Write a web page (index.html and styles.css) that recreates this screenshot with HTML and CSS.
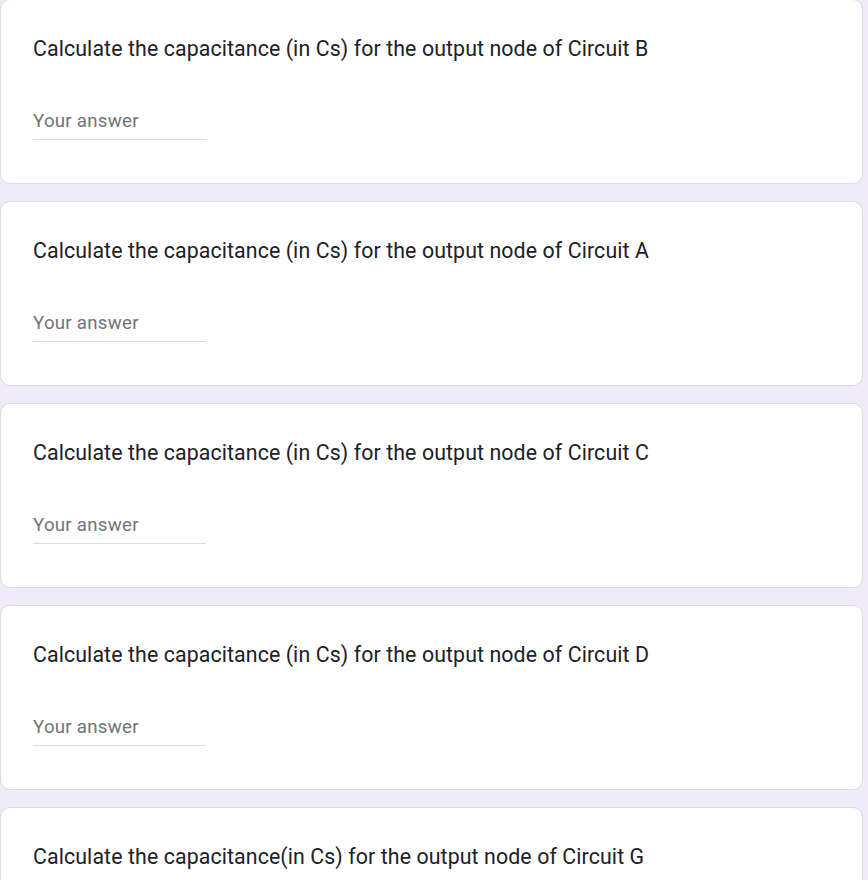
FILE: index.html
```html
<!DOCTYPE html>
<html lang="en">
<head>
<meta charset="utf-8">
<title>Form</title>
<link rel="stylesheet" href="styles.css">
</head>
<body>
<div class="list">
  <div class="card">
    <div class="title">Calculate the capacitance (in Cs) for the output node of Circuit B</div>
    <div class="answer"><span class="placeholder">Your answer</span></div>
  </div>
  <div class="card">
    <div class="title">Calculate the capacitance (in Cs) for the output node of Circuit A</div>
    <div class="answer"><span class="placeholder">Your answer</span></div>
  </div>
  <div class="card">
    <div class="title">Calculate the capacitance (in Cs) for the output node of Circuit C</div>
    <div class="answer"><span class="placeholder">Your answer</span></div>
  </div>
  <div class="card">
    <div class="title">Calculate the capacitance (in Cs) for the output node of Circuit D</div>
    <div class="answer"><span class="placeholder">Your answer</span></div>
  </div>
  <div class="card">
    <div class="title">Calculate the capacitance(in Cs) for the output node of Circuit G</div>
    <div class="answer"><span class="placeholder">Your answer</span></div>
  </div>
</div>
</body>
</html>
```
FILE: styles.css
```css
html, body {
  margin: 0;
  padding: 0;
  background: #f0ebf8;
  overflow: hidden;
}
body {
  font-family: Roboto, "Noto Sans", sans-serif;
  color: #202124;
}
.list {
  display: flex;
  flex-direction: column;
  gap: 17px;
  width: 863px;
  margin-top: -1px;
}
.card {
  background: #fff;
  border: 1px solid #dadce0;
  border-radius: 10px;
  height: 183px;
  padding: 0 32px;
  box-sizing: content-box;
  display: flex;
  flex-direction: column;
  align-items: flex-start;
}
.title {
  font-size: 21.33px;
  line-height: 28px;
  letter-spacing: 0.1px;
  margin-top: 35px;
  color: #202124;
  white-space: nowrap;
}
.answer {
  margin-top: 46px;
  width: 173px;
  border-bottom: 1px solid #dadce0;
  padding-bottom: 6px;
}
.placeholder {
  display: block;
  font-size: 18.67px;
  line-height: 24px;
  color: #70757a;
  letter-spacing: 0.27px;
}
```
